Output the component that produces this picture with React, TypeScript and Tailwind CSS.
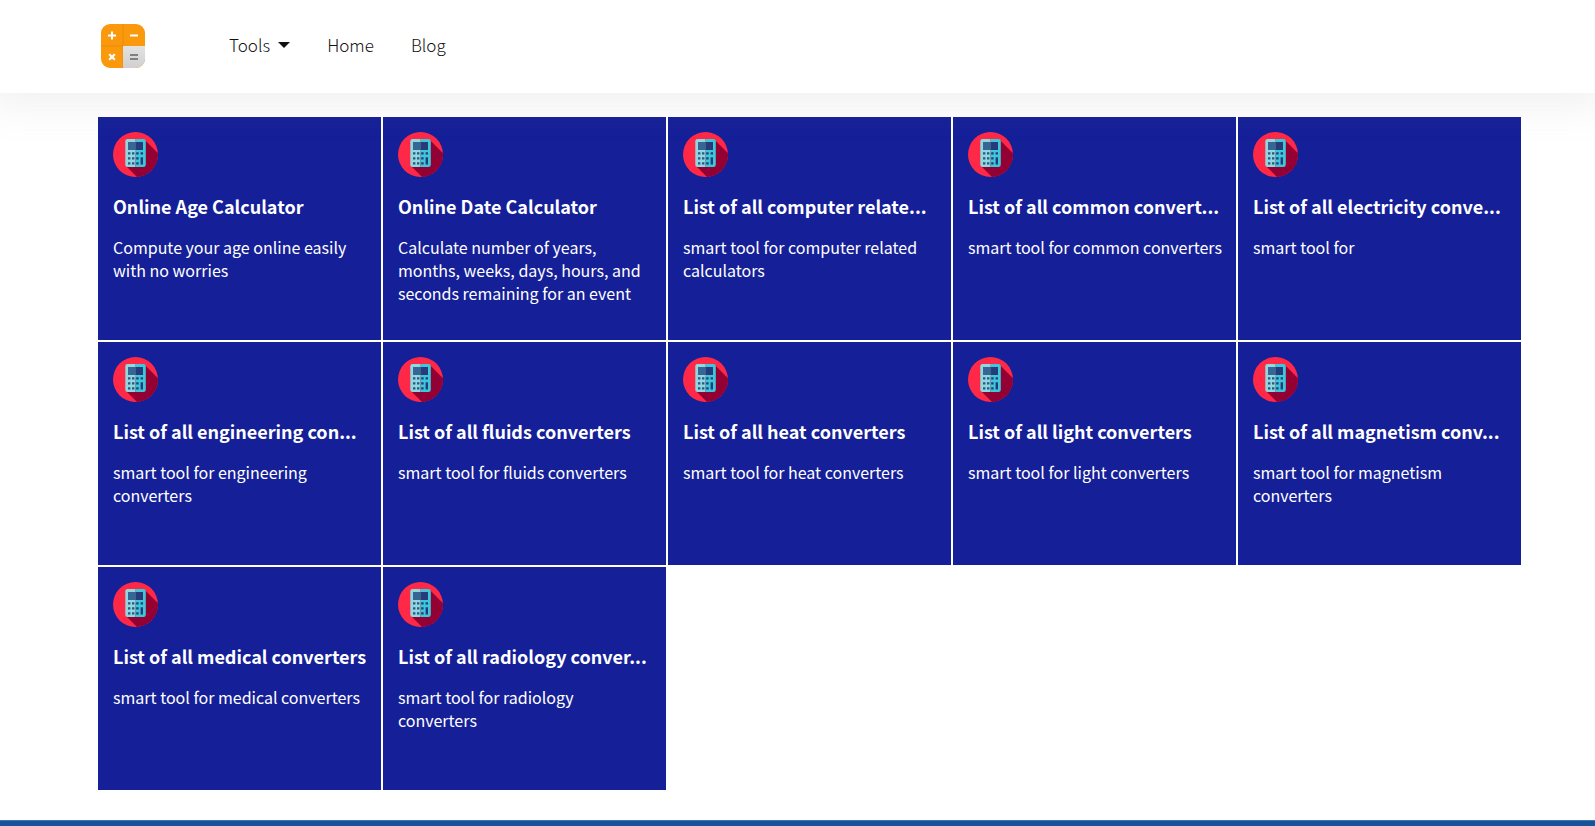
import React from 'react';

interface Tool {
  title: string;
  description: string;
}

const TOOLS: Tool[] = [
  { title: 'Online Age Calculator', description: 'Compute your age online easily with no worries' },
  {
    title: 'Online Date Calculator',
    description: 'Calculate number of years, months, weeks, days, hours, and seconds remaining for an event',
  },
  { title: 'List of all computer relate...', description: 'smart tool for computer related calculators' },
  { title: 'List of all common convert...', description: 'smart tool for common converters' },
  { title: 'List of all electricity conve...', description: 'smart tool for' },
  { title: 'List of all engineering con...', description: 'smart tool for engineering converters' },
  { title: 'List of all fluids converters', description: 'smart tool for fluids converters' },
  { title: 'List of all heat converters', description: 'smart tool for heat converters' },
  { title: 'List of all light converters', description: 'smart tool for light converters' },
  { title: 'List of all magnetism conv...', description: 'smart tool for magnetism converters' },
  { title: 'List of all medical converters', description: 'smart tool for medical converters' },
  { title: 'List of all radiology conver...', description: 'smart tool for radiology converters' },
];

function Logo() {
  return (
    <svg viewBox="0 0 44 44" className="h-11 w-11" aria-hidden="true">
      <defs>
        <clipPath id="logo-clip">
          <rect width="44" height="44" rx="9" />
        </clipPath>
        <linearGradient id="logo-gray" x1="0" y1="0" x2="0" y2="1">
          <stop offset="0" stopColor="#e2e2e2" />
          <stop offset="1" stopColor="#d0d0d0" />
        </linearGradient>
      </defs>
      <g clipPath="url(#logo-clip)">
        <rect width="44" height="44" fill="#fb990d" />
        <path d="M22 0v44M0 22h22" stroke="#e88b0c" strokeWidth="1" />
        <rect x="22" y="22" width="22" height="22" fill="url(#logo-gray)" />
      </g>
      <path d="M7 11.5h8M11 7.5v8M29 11.5h8" stroke="#fff" strokeWidth="2" />
      <path d="M8.2 30.2l5.6 5.6M13.8 30.2l-5.6 5.6" stroke="#fff" strokeWidth="2.2" />
      <path d="M29 31h8M29 35h8" stroke="#808080" strokeWidth="1.8" />
    </svg>
  );
}

function CalculatorIcon() {
  return (
    <svg viewBox="0 0 45 45" className="block h-[45px] w-[45px]" aria-hidden="true">
      <circle cx="22.5" cy="22.5" r="22.5" fill="#ff2947" />
      <path d="M32.4 8.5L45 21.3A22.5 22.5 0 0 1 24 45L13 34Z" fill="#930033" />
      <path d="M14.5 7h8v28h-8a2.2 2.2 0 0 1-2.2-2.2V9.2A2.2 2.2 0 0 1 14.5 7Z" fill="#8fd9de" />
      <path d="M22.5 7h8.1a2.2 2.2 0 0 1 2.2 2.2v23.6a2.2 2.2 0 0 1-2.2 2.2h-8.1Z" fill="#3bc8da" />
      <path d="M15 10h7.5v8H15Z" fill="#366695" />
      <path d="M22.5 10H30v8h-7.5Z" fill="#273b7a" />
      <path
        d="M15 20.2h2.4v2.4H15ZM19 20.2h2.4v2.4H19ZM15 25.2h2.4v2.4H15ZM19 25.2h2.4v2.4H19ZM15 30.2h2.4v2.4H15ZM19 30.2h2.4v2.4H19Z"
        fill="#2d5585"
      />
      <path
        d="M23.2 20.2h2.4v2.4h-2.4ZM27.6 20.2H30v2.4h-2.4ZM23.2 25.2h2.4v2.4h-2.4ZM23.2 30.2h2.4v2.4h-2.4ZM27.6 25.2H30v7.4h-2.4Z"
        fill="#273b7a"
      />
    </svg>
  );
}

function ToolCard({ title, description }: Tool) {
  return (
    <a href="#" className="block min-h-[223px] min-w-0 bg-[#151f98] py-[15px] pr-3 pl-[15px] text-white">
      <CalculatorIcon />
      <h2 className="mt-[15px] text-[18px] leading-7 font-bold whitespace-nowrap">{title}</h2>
      <p className="mt-4 text-[16px] leading-[23px]">{description}</p>
    </a>
  );
}

export default function App() {
  return (
    <div className="overflow-x-hidden bg-white font-['Noto_Sans_CJK_SC',sans-serif]">
      <header className="relative z-10 flex h-[93px] items-center bg-white pb-0.5 pl-[101px] shadow-[0_0_40px_10px_rgba(150,150,150,0.15)]">
        <a href="#" aria-label="Calculators">
          <Logo />
        </a>
        <nav className="ml-[84px] flex items-center gap-[37px] pb-0.5 text-[17px] font-light text-[#111]">
          <button type="button" className="flex items-center gap-2">
            Tools
            <svg viewBox="0 0 12 6" className="h-[6px] w-3" aria-hidden="true">
              <path d="M0 0h12L6 6Z" fill="#111" />
            </svg>
          </button>
          <a href="#">Home</a>
          <a href="#">Blog</a>
        </nav>
      </header>

      <main className="mt-6 mr-[74px] mb-[30px] ml-[98px] grid grid-cols-5 gap-[2px]">
        {TOOLS.map((tool) => (
          <ToolCard key={tool.title} {...tool} />
        ))}
      </main>

      <footer className="h-1.5 border-t border-[#3f74ad] bg-[#15549a]" />
    </div>
  );
}
